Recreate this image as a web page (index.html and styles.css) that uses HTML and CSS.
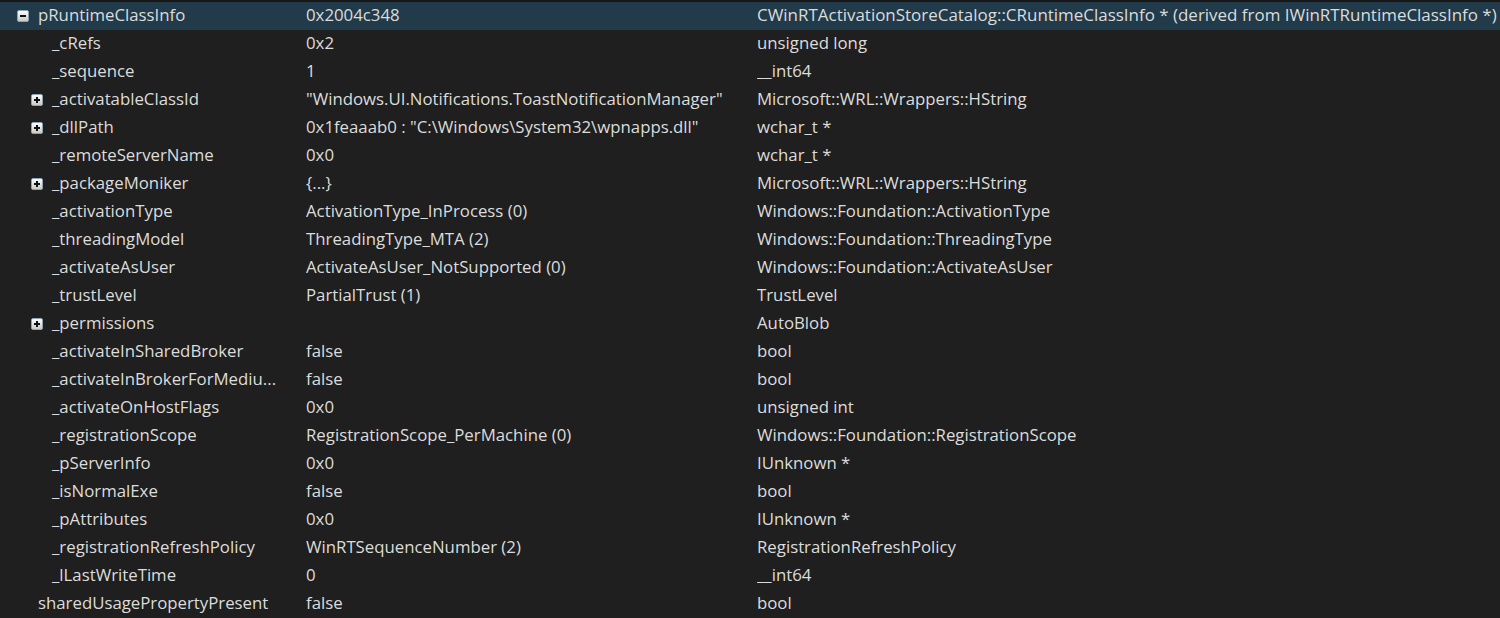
FILE: index.html
```html
<!DOCTYPE html>
<html>
<head>
<meta charset="utf-8">
<link rel="stylesheet" href="styles.css">
</head>
<body>
<div class="topstrip"></div>
<div class="watch">
  <div class="row selected">
    <div class="name lvl0"><span class="exp"><svg width="12" height="12" viewBox="0 0 12 12"><rect x="0.5" y="0.5" width="11" height="11" rx="1.5" fill="url(#g)" stroke="#8fa3b8"/><rect x="3" y="5" width="6" height="2" fill="#111"/><defs><linearGradient id="g" x1="0" y1="0" x2="0" y2="1"><stop offset="0" stop-color="#ffffff"/><stop offset="1" stop-color="#c9c9c0"/></linearGradient></defs></svg></span>pRuntimeClassInfo</div>
    <div class="val">0x2004c348</div>
    <div class="type"><span class="squeeze">CWinRTActivationStoreCatalog::CRuntimeClassInfo * (derived from IWinRTRuntimeClassInfo *)</span></div>
  </div>
  <div class="row"><div class="name lvl1"><span class="exp"></span>_cRefs</div><div class="val">0x2</div><div class="type">unsigned long</div></div>
  <div class="row"><div class="name lvl1"><span class="exp"></span>_sequence</div><div class="val">1</div><div class="type">__int64</div></div>
  <div class="row"><div class="name lvl1"><span class="exp"><svg width="12" height="12" viewBox="0 0 12 12"><rect x="0.5" y="0.5" width="11" height="11" rx="1.5" fill="url(#g)" stroke="#8fa3b8"/><rect x="3" y="5" width="6" height="2" fill="#111"/><rect x="5" y="3" width="2" height="6" fill="#111"/></svg></span>_activatableClassId</div><div class="val">"Windows.UI.Notifications.ToastNotificationManager"</div><div class="type">Microsoft::WRL::Wrappers::HString</div></div>
  <div class="row"><div class="name lvl1"><span class="exp"><svg width="12" height="12" viewBox="0 0 12 12"><rect x="0.5" y="0.5" width="11" height="11" rx="1.5" fill="url(#g)" stroke="#8fa3b8"/><rect x="3" y="5" width="6" height="2" fill="#111"/><rect x="5" y="3" width="2" height="6" fill="#111"/></svg></span>_dllPath</div><div class="val">0x1feaaab0 : "C:\Windows\System32\wpnapps.dll"</div><div class="type">wchar_t *</div></div>
  <div class="row"><div class="name lvl1"><span class="exp"></span>_remoteServerName</div><div class="val">0x0</div><div class="type">wchar_t *</div></div>
  <div class="row"><div class="name lvl1"><span class="exp"><svg width="12" height="12" viewBox="0 0 12 12"><rect x="0.5" y="0.5" width="11" height="11" rx="1.5" fill="url(#g)" stroke="#8fa3b8"/><rect x="3" y="5" width="6" height="2" fill="#111"/><rect x="5" y="3" width="2" height="6" fill="#111"/></svg></span>_packageMoniker</div><div class="val">{...}</div><div class="type">Microsoft::WRL::Wrappers::HString</div></div>
  <div class="row"><div class="name lvl1"><span class="exp"></span>_activationType</div><div class="val">ActivationType_InProcess (0)</div><div class="type">Windows::Foundation::ActivationType</div></div>
  <div class="row"><div class="name lvl1"><span class="exp"></span>_threadingModel</div><div class="val">ThreadingType_MTA (2)</div><div class="type">Windows::Foundation::ThreadingType</div></div>
  <div class="row"><div class="name lvl1"><span class="exp"></span>_activateAsUser</div><div class="val">ActivateAsUser_NotSupported (0)</div><div class="type">Windows::Foundation::ActivateAsUser</div></div>
  <div class="row"><div class="name lvl1"><span class="exp"></span>_trustLevel</div><div class="val">PartialTrust (1)</div><div class="type">TrustLevel</div></div>
  <div class="row"><div class="name lvl1"><span class="exp"><svg width="12" height="12" viewBox="0 0 12 12"><rect x="0.5" y="0.5" width="11" height="11" rx="1.5" fill="url(#g)" stroke="#8fa3b8"/><rect x="3" y="5" width="6" height="2" fill="#111"/><rect x="5" y="3" width="2" height="6" fill="#111"/></svg></span>_permissions</div><div class="val"></div><div class="type">AutoBlob</div></div>
  <div class="row"><div class="name lvl1"><span class="exp"></span>_activateInSharedBroker</div><div class="val">false</div><div class="type">bool</div></div>
  <div class="row"><div class="name lvl1"><span class="exp"></span>_activateInBrokerForMediu...</div><div class="val">false</div><div class="type">bool</div></div>
  <div class="row"><div class="name lvl1"><span class="exp"></span>_activateOnHostFlags</div><div class="val">0x0</div><div class="type">unsigned int</div></div>
  <div class="row"><div class="name lvl1"><span class="exp"></span>_registrationScope</div><div class="val">RegistrationScope_PerMachine (0)</div><div class="type">Windows::Foundation::RegistrationScope</div></div>
  <div class="row"><div class="name lvl1"><span class="exp"></span>_pServerInfo</div><div class="val">0x0</div><div class="type">IUnknown *</div></div>
  <div class="row"><div class="name lvl1"><span class="exp"></span>_isNormalExe</div><div class="val">false</div><div class="type">bool</div></div>
  <div class="row"><div class="name lvl1"><span class="exp"></span>_pAttributes</div><div class="val">0x0</div><div class="type">IUnknown *</div></div>
  <div class="row"><div class="name lvl1"><span class="exp"></span>_registrationRefreshPolicy</div><div class="val">WinRTSequenceNumber (2)</div><div class="type">RegistrationRefreshPolicy</div></div>
  <div class="row"><div class="name lvl1"><span class="exp"></span>_lLastWriteTime</div><div class="val">0</div><div class="type">__int64</div></div>
  <div class="row"><div class="name lvl0"><span class="exp"></span>sharedUsagePropertyPresent</div><div class="val">false</div><div class="type">bool</div></div>
</div>
</body>
</html>
```
FILE: styles.css
```css
html, body {
  margin: 0;
  padding: 0;
  background: #1f1f1f;
  overflow: hidden;
}
body {
  font-family: "Open Sans", "Noto Sans", sans-serif;
  font-size: 16.8px;
  color: #dcdcdc;
}
.topstrip {
  height: 2px;
  background: #171717;
}
.watch {
  display: flex;
  flex-direction: column;
}
.row {
  display: grid;
  grid-template-columns: 306px 451px 1fr;
  height: 28px;
  box-sizing: border-box;
  padding-bottom: 3px;
  align-items: center;
  white-space: nowrap;
}
.row.selected {
  background: #213b4a;
}
.name {
  display: flex;
  align-items: center;
}
.lvl0 { padding-left: 17px; }
.lvl1 { padding-left: 31px; }
.exp {
  width: 21px;
  height: 12px;
  display: flex;
  align-items: center;
  flex: none;
  position: relative;
  top: 1px;
}
.exp svg { display: block; }
.val, .type {
  overflow: hidden;
}
.squeeze {
  display: inline-block;
  transform-origin: left center;
  transform: scaleX(1.01);
}
```
